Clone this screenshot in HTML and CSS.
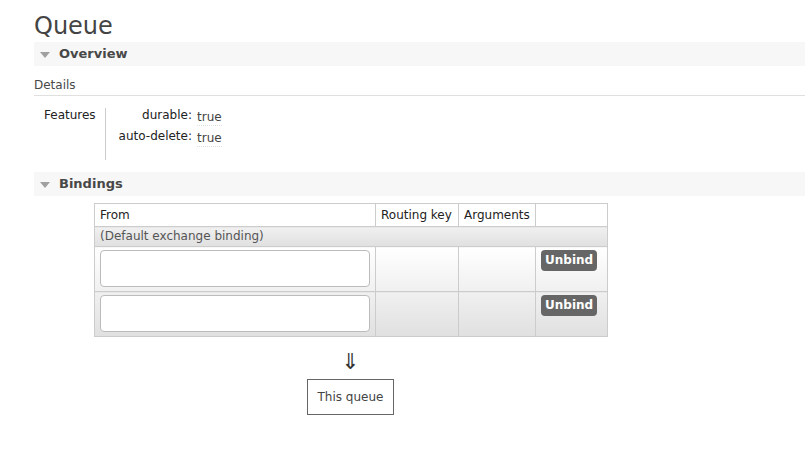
FILE: index.html
```html
<!DOCTYPE html>
<html>
<head>
<meta charset="utf-8">
<link rel="stylesheet" href="styles.css">
</head>
<body>
<div class="main">
  <h1 class="title">Queue</h1>
  <div class="section">
    <h2 class="section-head"><span class="tri"></span>Overview</h2>
    <div class="section-body">
      <h3 class="sub">Details</h3>
      <div class="facts">
        <div class="facts-label">Features</div>
        <div class="facts-values">
          <div class="kv"><span class="k">durable:</span><span class="v">true</span></div>
          <div class="kv"><span class="k">auto-delete:</span><span class="v">true</span></div>
        </div>
      </div>
    </div>
  </div>
  <div class="section">
    <h2 class="section-head"><span class="tri"></span>Bindings</h2>
    <div class="bindings">
      <table class="list">
        <colgroup>
          <col class="c-from"><col class="c-rk"><col class="c-args"><col class="c-act">
        </colgroup>
        <thead>
          <tr><th>From</th><th>Routing key</th><th>Arguments</th><th></th></tr>
        </thead>
        <tbody>
          <tr class="alt1"><td colspan="4" class="default">(Default exchange binding)</td></tr>
          <tr class="alt2">
            <td><div class="field"></div></td><td></td><td></td>
            <td><button class="btn">Unbind</button></td>
          </tr>
          <tr class="alt1">
            <td><div class="field"></div></td><td></td><td></td>
            <td><button class="btn">Unbind</button></td>
          </tr>
        </tbody>
      </table>
      <div class="flow">
        <div class="arrow">⇓</div>
        <div class="this-queue">This queue</div>
      </div>
    </div>
  </div>
</div>
</body>
</html>
```
FILE: styles.css
```css
html, body {
  margin: 0;
  padding: 0;
  background: #fff;
}
body {
  font-family: "DejaVu Sans", Verdana, sans-serif;
  font-size: 12px;
  color: #484848;
}
.main {
  padding: 0 2px 0 34px;
}
.title {
  margin: 10px 0 0;
  font-size: 24px;
  font-weight: normal;
  line-height: 32px;
  color: #444;
}
.section-head {
  margin: 0;
  height: 24px;
  line-height: 24px;
  background: #f7f7f7;
  font-size: 13px;
  font-weight: bold;
  color: #484848;
  display: flex;
  align-items: center;
}
.tri {
  width: 0;
  height: 0;
  border-left: 5px solid transparent;
  border-right: 5px solid transparent;
  border-top: 6px solid #a0a0a0;
  margin: 1px 9px 0 6px;
}
.sub {
  margin: 12px 0 0;
  padding-bottom: 2px;
  font-size: 12px;
  font-weight: normal;
  line-height: 15px;
  color: #484848;
  border-bottom: 1px solid #e0e0e0;
}
.facts {
  display: flex;
  margin-top: 12px;
  height: 52px;
  margin-bottom: 12px;
}
.facts-label {
  width: 72px;
  padding-left: 10px;
  box-sizing: border-box;
  border-right: 1px solid #ccc;
  line-height: 15px;
  color: #222;
}
.kv {
  display: flex;
  line-height: 15px;
  height: 21px;
}
.k {
  width: 86px;
  text-align: right;
  color: #222;
}
.v {
  margin-left: 5px;
  margin-top: 2px;
  color: #444;
  border-bottom: 1px dotted #ddd;
  height: 15px;
}
.bindings {
  padding: 7px 0 0 60px;
}
table.list {
  border-collapse: collapse;
  table-layout: fixed;
  width: 513px;
  border: 1px solid #ccc;
}
col.c-from { width: 281px; }
col.c-rk { width: 83px; }
col.c-args { width: 77px; }
col.c-act { width: 72px; }
table.list th, table.list td {
  border: 1px solid #ccc;
  padding: 0 5px;
  text-align: left;
  vertical-align: top;
  font-size: 12px;
  white-space: nowrap;
}
table.list th {
  font-weight: normal;
  color: #222;
  height: 22px;
  line-height: 22px;
  background: #fff;
}
tr.alt1 td {
  background: linear-gradient(#f0f0f0, #e0e0e0);
}
tr.alt2 td {
  background: linear-gradient(#ffffff, #f0f0f0);
}
table.list td.default {
  height: 19px;
  line-height: 19px;
  color: #555;
}
tbody tr td {
  height: 44px;
}
.field {
  width: 270px;
  height: 37px;
  box-sizing: border-box;
  margin-top: 3px;
  border: 1px solid #bbb;
  border-radius: 4px;
  background: #fff;
}
.btn {
  margin-top: 3px;
  font-family: "DejaVu Sans", Verdana, sans-serif;
  font-size: 12px;
  font-weight: bold;
  color: #fff;
  background: #666;
  border: none;
  border-radius: 4px;
  padding: 0 4px;
  height: 21px;
  line-height: 21px;
}
.flow {
  width: 513px;
  display: flex;
  flex-direction: column;
  align-items: center;
  padding-top: 14px;
}
.arrow {
  font-size: 22px;
  line-height: 22px;
  color: #333;
}
.this-queue {
  margin-top: 6px;
  border: 1px solid #666;
  padding: 0 10px;
  height: 34px;
  line-height: 34px;
  color: #444;
}
```
